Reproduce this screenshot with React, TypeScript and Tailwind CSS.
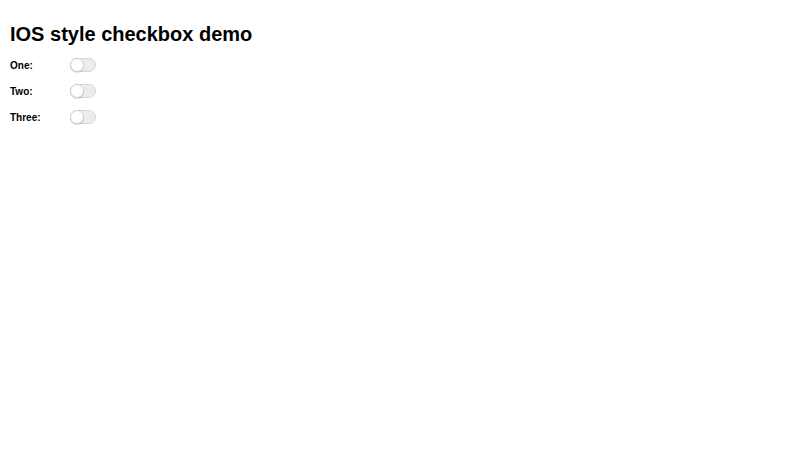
import React from "react";

function Toggle() {
  return (
    <span className="relative inline-block w-[26px] h-[14px] rounded-full bg-[#ececec] border border-[#d6d6d6]">
      <span className="absolute left-[-1px] top-[-1px] w-[14px] h-[14px] rounded-full bg-white border border-[#cfcfcf] shadow-[0_1px_1px_rgba(0,0,0,0.12)]" />
    </span>
  );
}

export default function App() {
  const rows = ["One:", "Two:", "Three:"];
  return (
    <div className="bg-white min-h-[450px] px-[10px] pt-[23px] text-black" style={{ fontFamily: '"Liberation Sans", Arial, sans-serif' }}>
      <h1 className="text-[20px] font-bold leading-[23px] m-0">IOS style checkbox demo</h1>
      <div className="mt-[6px] flex flex-col">
        {rows.map((r) => (
          <div key={r} className="flex items-center h-[26px]">
            <span className="w-[60px] text-[10px] font-bold">{r}</span>
            <Toggle />
          </div>
        ))}
      </div>
    </div>
  );
}
